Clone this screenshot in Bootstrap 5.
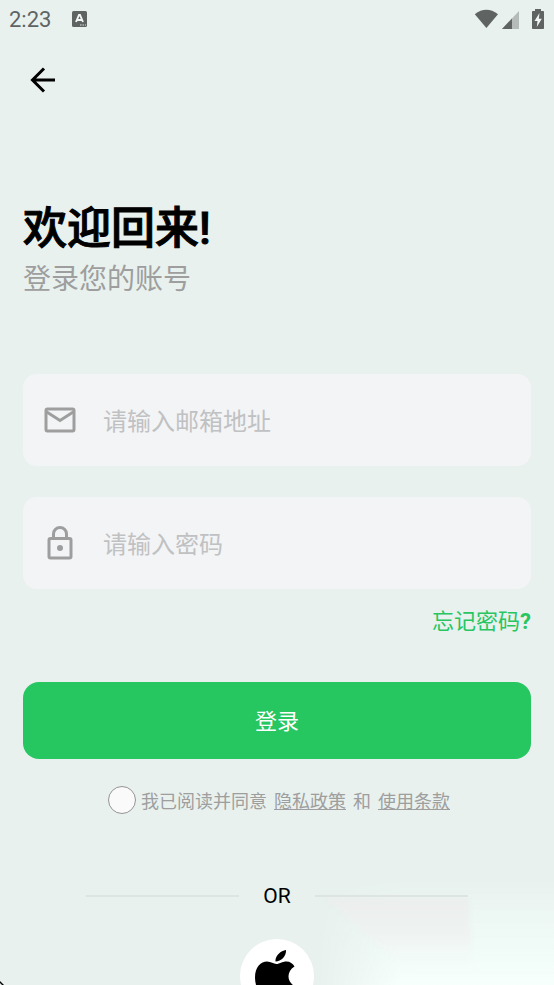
<!DOCTYPE html>
<html lang="zh-CN">
<head>
<meta charset="utf-8">
<meta name="viewport" content="width=device-width, initial-scale=1">
<title>登录</title>
<link href="https://cdn.jsdelivr.net/npm/bootstrap@5.3.0/dist/css/bootstrap.min.css" rel="stylesheet">
<style>
  html { scrollbar-width: none; }
  html::-webkit-scrollbar { display: none; }
  body { background: #e8f1ee; font-family: Roboto, "Noto Sans CJK SC", sans-serif; color: #000; }
  .screen { height: 100vh; min-height: 600px; }
  .status-bar { height: 38px; padding: 0 8px 0 9px; color: #5f6463; font-size: 22px; line-height: 38px; }
  .status-bar span { padding-top: 2px; }
  .top-nav { height: 84px; padding: 0 24px; }
  .content-area { padding: 0 23px; }
  .welcome { margin-top: 80px; font-size: 44px; line-height: 54px; font-weight: 500; -webkit-text-stroke: 1px #000; }
  .welcome-sub { font-size: 28px; line-height: 40px; color: #9e9e9e; margin: 4px 0 74px; }
  .field { height: 92px; border-radius: 14px; background: #f3f4f6; padding: 0 20px; gap: 26px; color: #9e9e9e; margin-bottom: 31px; }
  .field .form-control, .field .form-control:focus { font-size: 24px; line-height: 36px; color: #333; padding: 4px 0 0; }
  .field .form-control::placeholder { color: #c0c1c2; font-weight: 400; }
  .forgot { font-size: 22px; line-height: 32px; color: #27c660; margin-top: -14px; }
  .forgot b { font-weight: 700; }
  .btn-login, .btn-login:hover { background: #26c661; color: #fff; height: 77px; border-radius: 16px; font-size: 22px; font-weight: 400; margin-top: 44px; padding-top: 8px; }
  .agree { font-size: 18px; line-height: 28px; color: #9e9e9e; margin-top: 25px; padding-left: 4px; }
  .agree .form-check-input { width: 28px; height: 28px; border: 1px solid #949494; background-color: #fafafa; margin-right: 5px; }
  .agree .links { gap: 7px; padding-top: 4px; }
  .or-row { margin: 64px 63px 0; gap: 24px; font-size: 21px; line-height: 32px; }
  .or-row hr { border-top: 2px solid #dee4e2; opacity: 1; }
  .apple { width: 74px; height: 74px; margin-top: 27px; }
  .glow { width: 254px; height: 145px; z-index: -1; }
  .corner { width: 4px; height: 4px; }
</style>
</head>
<body>
<div class="screen position-relative overflow-hidden z-0">
  <svg class="glow position-absolute end-0 bottom-0" viewBox="0 0 254 145" aria-hidden="true">
    <defs>
      <linearGradient id="fade" x1="0" y1="0" x2="0" y2="1">
        <stop offset=".25" stop-color="#f5fffb" stop-opacity="0"/>
        <stop offset=".7" stop-color="#f2fdf9" stop-opacity=".75"/>
        <stop offset="1" stop-color="#f7fffc"/>
      </linearGradient>
      <linearGradient id="side" x1="0" y1="0" x2="1" y2="0">
        <stop offset=".06" stop-color="#000"/>
        <stop offset=".4" stop-color="#fff"/>
      </linearGradient>
      <linearGradient id="wedge" x1="0" y1="0" x2="0" y2="1">
        <stop offset="0" stop-color="#ebeeed"/>
        <stop offset=".5" stop-color="#eff3f2"/>
        <stop offset="1" stop-color="#f7fffc" stop-opacity="0"/>
      </linearGradient>
      <mask id="edge"><rect width="254" height="145" fill="url(#side)"/></mask>
      <filter id="soft" x="-10%" y="-10%" width="120%" height="120%" color-interpolation-filters="sRGB"><feGaussianBlur stdDeviation="2"/></filter>
    </defs>
    <rect width="254" height="145" fill="url(#fade)" mask="url(#edge)"/>
    <path d="M26 58H168L174 135H112Z" fill="url(#wedge)" filter="url(#soft)"/>
  </svg>

  <div class="status-bar d-flex align-items-center justify-content-between">
    <div class="d-flex align-items-center">
      <span>2:23</span>
      <svg class="ms-3" width="24" height="18" viewBox="0 0 24 18" aria-hidden="true"><rect x="5" y="1" width="15" height="16" rx="1.5" fill="#5f6463"/><path d="M9 12l3-7h1l3 7M10.300 10h4.400" fill="none" stroke="#f2f7f5" stroke-width="1.900"/><path d="M13 15h1.500M15.500 15H17M18 15h1" stroke="#dde5e2" stroke-width="1.200"/></svg>
    </div>
    <svg width="72" height="24" viewBox="0 0 72 24" aria-hidden="true" fill="#5f6463">
      <path d="M.8 7.200Q12.300-1.500 24 7.200L12.400 21Z"/>
      <path d="M45 4v18H28Z" fill="#b4bbb9"/><path d="M28 22L38 11.500V22Z"/>
      <path d="M61 2h6v2h2.200q.8 0 .8.800V21.200q0 .8-.8.800H58.800q-.8 0-.8-.8V4.800q0-.8.8-.8H61Z"/>
      <path d="M65.500 6L60.500 14H63.500L62.800 20L67.800 11.800H64.800Z" fill="#f2f7f5"/>
    </svg>
  </div>

  <nav class="top-nav d-flex align-items-center" aria-label="导航">
    <button type="button" class="btn p-0 border-0 d-flex" aria-label="返回">
      <svg width="38" height="38" viewBox="0 0 38 38" fill="none" stroke="#000" stroke-width="3"><path d="M31 19H9M20 7.500L8.500 19L20 30.500"/></svg>
    </button>
  </nav>

  <main class="content-area">
    <h1 class="welcome mb-0">欢迎回来!</h1>
    <p class="welcome-sub">登录您的账号</p>
    <form>
      <div class="field d-flex align-items-center">
        <label for="email" class="d-flex" aria-label="邮箱地址">
          <svg width="34" height="36" viewBox="0 0 34 36" fill="none" stroke="#9e9e9e" stroke-width="3"><rect x="3" y="7" width="28" height="22" rx="1.500"/><path d="M3 9.500L17 18.500L31 9.500"/></svg>
        </label>
        <input id="email" type="email" class="form-control border-0 bg-transparent shadow-none" placeholder="请输入邮箱地址">
      </div>
      <div class="field d-flex align-items-center">
        <label for="password" class="d-flex" aria-label="密码">
          <svg width="34" height="36" viewBox="0 0 34 36" fill="none" stroke="#9e9e9e" stroke-width="3"><rect x="6" y="13.500" width="22" height="19.500" rx="1.500"/><path d="M10.500 13.500V9a6.500 6.500 0 0 1 13 0V13.500"/><circle cx="17" cy="23" r="3" fill="#9e9e9e" stroke="none"/></svg>
        </label>
        <input id="password" type="password" class="form-control border-0 bg-transparent shadow-none" placeholder="请输入密码">
      </div>
      <div class="d-flex justify-content-end"><a href="#" class="forgot text-decoration-none">忘记密码<b>?</b></a></div>
      <button type="submit" class="btn btn-login w-100 border-0">登录</button>
      <div class="agree d-flex align-items-center justify-content-center">
        <input id="agree" type="checkbox" class="form-check-input rounded-circle mt-0 flex-shrink-0">
        <div class="links d-flex flex-wrap">
          <label for="agree">我已阅读并同意</label>
          <a href="#" class="text-reset">隐私政策</a>
          <span>和</span>
          <a href="#" class="text-reset">使用条款</a>
        </div>
      </div>
    </form>
    <div class="or-row d-flex align-items-center">
      <hr class="flex-grow-1 my-0"><span>OR</span><hr class="flex-grow-1 my-0">
    </div>
    <button type="button" class="apple btn p-0 border-0 rounded-circle bg-white d-flex align-items-center justify-content-center mx-auto" aria-label="Apple 登录">
      <svg width="44" height="54" viewBox="0 0 44 52"><path d="M31 0C31.500 6 26.500 11.500 20.500 11.500C20 6 25.500 .8 31 0ZM39.500 16.500C30.500 22 32 33.500 41.500 37C39.500 43.500 34.500 50 30.500 50C27 50 26 48 21.500 48C17 48 15.500 50 12.500 50C6.500 50 0 38 0 27.500C0 17 6 11.500 12 11.500C16 11.500 18.500 14 21.500 14C24.500 14 27 11.500 31.500 11.500C35 11.500 38 13.500 39.500 16.500Z"/></svg>
    </button>
  </main>
  <svg class="corner position-absolute start-0 bottom-0" viewBox="0 0 4 4" aria-hidden="true"><path d="M0 0L4 4H2L0 2Z"/></svg>
</div>
<script src="https://cdn.jsdelivr.net/npm/bootstrap@5.3.0/dist/js/bootstrap.bundle.min.js"></script>
</body>
</html>
